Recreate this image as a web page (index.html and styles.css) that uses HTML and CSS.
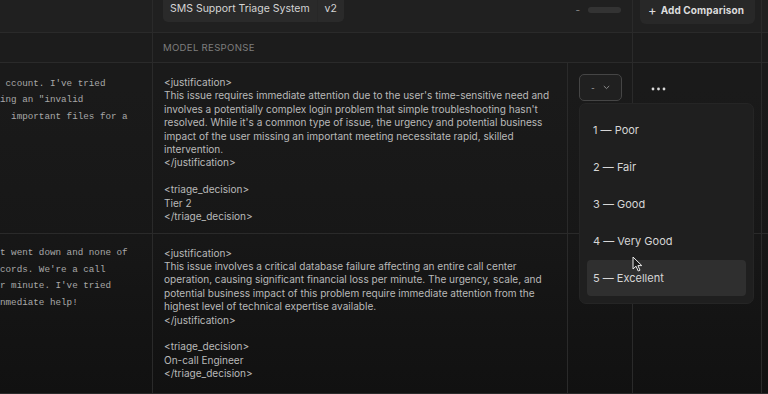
FILE: index.html
```html
<!DOCTYPE html>
<html>
<head>
<meta charset="utf-8">
<link rel="stylesheet" href="styles.css">
</head>
<body>
<div class="table">
  <div class="cell hd"></div>
  <div class="cell hd group">
    <div class="chip"><span class="chip-name">SMS Support Triage System</span><span class="chip-ver">v2</span></div>
    <div class="score"><span class="dash">-</span><span class="bar"></span></div>
  </div>
  <div class="cell hd add-cell">
    <button class="add-btn"><span class="plus">+</span>Add Comparison</button>
  </div>
  <div class="cell hd edge"></div>

  <div class="cell sub"></div>
  <div class="cell sub group2">MODEL RESPONSE</div>
  <div class="cell sub"></div>
  <div class="cell sub edge"></div>

  <div class="cell row r1 prompt"><pre class="mono"> ccount. I've tried
ing an "invalid
  important files for a</pre></div>
  <div class="cell row r1 resp"><pre class="text">&lt;justification&gt;
This issue requires immediate attention due to the user's time-sensitive need and
involves a potentially complex login problem that simple troubleshooting hasn't
resolved. While it's a common type of issue, the urgency and potential business
impact of the user missing an important meeting necessitate rapid, skilled
intervention.
&lt;/justification&gt;

&lt;triage_decision&gt;
Tier 2
&lt;/triage_decision&gt;</pre></div>
  <div class="cell row r1 rating">
    <button class="rate-btn"><span>-</span><svg width="7" height="5" viewBox="0 0 7 5"><polyline points="0.8,1 3.5,3.6 6.2,1" fill="none" stroke="#8a8a8a" stroke-width="1"/></svg></button>
    <div class="menu">
      <div class="item">1 — Poor</div>
      <div class="item">2 — Fair</div>
      <div class="item">3 — Good</div>
      <div class="item">4 — Very Good</div>
      <div class="item active">5 — Excellent</div>
    </div>
    <svg class="cursor" width="11" height="16" viewBox="0 0 11 16"><path d="M1 1 L1 13 L4 10.2 L6.2 15 L8 14.2 L5.9 9.6 L9.8 9.6 Z" fill="#1a1a1a" stroke="#e8e8e8" stroke-width="1" stroke-linejoin="round"/></svg>
  </div>
  <div class="cell row r1 actions">
    <svg class="dots" width="15" height="4" viewBox="0 0 15 4"><circle cx="2" cy="2" r="1.4" fill="#d8d8d8"/><circle cx="7.5" cy="2" r="1.4" fill="#d8d8d8"/><circle cx="13" cy="2" r="1.4" fill="#d8d8d8"/></svg>
  </div>
  <div class="cell row r1 edge"></div>

  <div class="cell row r2 prompt"><pre class="mono">t went down and none of
cords. We're a call
r minute. I've tried
nmediate help!</pre></div>
  <div class="cell row r2 resp"><pre class="text">&lt;justification&gt;
This issue involves a critical database failure affecting an entire call center
operation, causing significant financial loss per minute. The urgency, scale, and
potential business impact of this problem require immediate attention from the
highest level of technical expertise available.
&lt;/justification&gt;

&lt;triage_decision&gt;
On-call Engineer
&lt;/triage_decision&gt;</pre></div>
  <div class="cell row r2 rating"></div>
  <div class="cell row r2 actions"></div>
  <div class="cell row r2 edge"></div>
</div>
</body>
</html>
```
FILE: styles.css
```css
* { box-sizing: border-box; }
html, body { margin: 0; padding: 0; }
body {
  width: 768px;
  height: 394px;
  overflow: hidden;
  background: #141414;
  font-family: Inter, "Noto Sans", sans-serif;
  color: #c8c8c8;
}
.table {
  display: grid;
  grid-template-columns: 153px 415px 65px 129px 6px;
  grid-template-rows: 33px 30px 171px 160px;
  background: linear-gradient(#1a1a1a 0px, #1a1a1a 90px, #171717 240px, #111111 394px);
}
.cell {
  border-right: 1px solid #2a2a2a;
  border-bottom: 1px solid #2a2a2a;
  min-width: 0;
}
.edge { border-right: none; background: #1c1c1c; }
.hd { background: #202020; display: flex; align-items: flex-end; padding-bottom: 10px; }
.group { grid-column: span 2; justify-content: space-between; padding-left: 10px; padding-right: 11px; }
.chip {
  display: flex;
  height: 28px;
  background: #2a2a2a;
  border-radius: 5px;
  font-size: 10.5px;
  color: #d4d4d4;
  overflow: hidden;
}
.chip-name { display: flex; align-items: flex-end; padding: 0 7px 7px 7px; }
.chip-ver { display: flex; align-items: flex-end; padding: 0 7px 7px 7px; border-left: 1px solid #272727; }
.score { display: flex; align-items: center; gap: 8px; height: 22px; padding-bottom: 2px; }
.dash { color: #8a8a8a; font-size: 10px; }
.bar { width: 33px; height: 6px; border-radius: 3px; background: #333333; }
.add-cell { padding-left: 7px; padding-bottom: 8px; }
.add-btn {
  height: 30px;
  width: 115px;
  border: none;
  border-radius: 6px;
  background: #282828;
  color: #dcdcdc;
  font-family: Inter, sans-serif;
  font-weight: 700;
  font-size: 10px;
  display: flex;
  align-items: flex-end;
  padding: 0 0 8px 8px;
  letter-spacing: 0.1px;
}
.plus { font-weight: 400; font-size: 13px; margin-right: 4px; line-height: 11px; }
.sub { background: #1c1c1c; display: flex; align-items: center; }
.group2 {
  grid-column: span 2;
  padding-left: 10px;
  font-size: 9.6px;
  color: #7e7e7e;
  letter-spacing: 0.3px;
}
.row { background: transparent; }
.prompt { padding-top: 12.5px; overflow: hidden; }
.r2.prompt { padding-top: 11px; }
.mono {
  margin: 0;
  font-family: "Liberation Mono", "DejaVu Sans Mono", monospace;
  font-size: 9.25px;
  line-height: 16.7px;
  color: #a8a8a8;
  white-space: pre;
}
.resp { padding: 13px 0 0 11px; overflow: hidden; }
.r2.resp { padding-top: 12.5px; }
.text {
  margin: 0;
  font-family: Inter, sans-serif;
  font-size: 10.05px;
  line-height: 13.4px;
  color: #b9b9b9;
  white-space: pre;
}
.rating { position: relative; padding: 11px 0 0 11px; }
.rate-btn {
  width: 43px;
  height: 27px;
  border: 1px solid #454545;
  border-radius: 5px;
  background: #202020;
  color: #8a8a8a;
  font-size: 10px;
  display: flex;
  align-items: center;
  justify-content: center;
  gap: 8px;
  padding: 0;
}
.menu {
  position: absolute;
  top: 40px;
  left: 11px;
  width: 175px;
  padding: 8px 7px 7px 7px;
  background: #1f1f1f;
  border: 1px solid #252525;
  border-radius: 7px;
  display: flex;
  flex-direction: column;
  gap: 1px;
  z-index: 5;
}
.item {
  height: 36px;
  display: flex;
  align-items: center;
  padding-left: 6px;
  font-size: 11px;
  color: #d6d6d6;
  border-radius: 4px;
}
.item.active { background: #2f2f2f; }
.cursor { position: absolute; left: 64px; top: 193px; z-index: 6; }
.actions { padding: 24px 0 0 18px; }
.dots { display: block; }
```
